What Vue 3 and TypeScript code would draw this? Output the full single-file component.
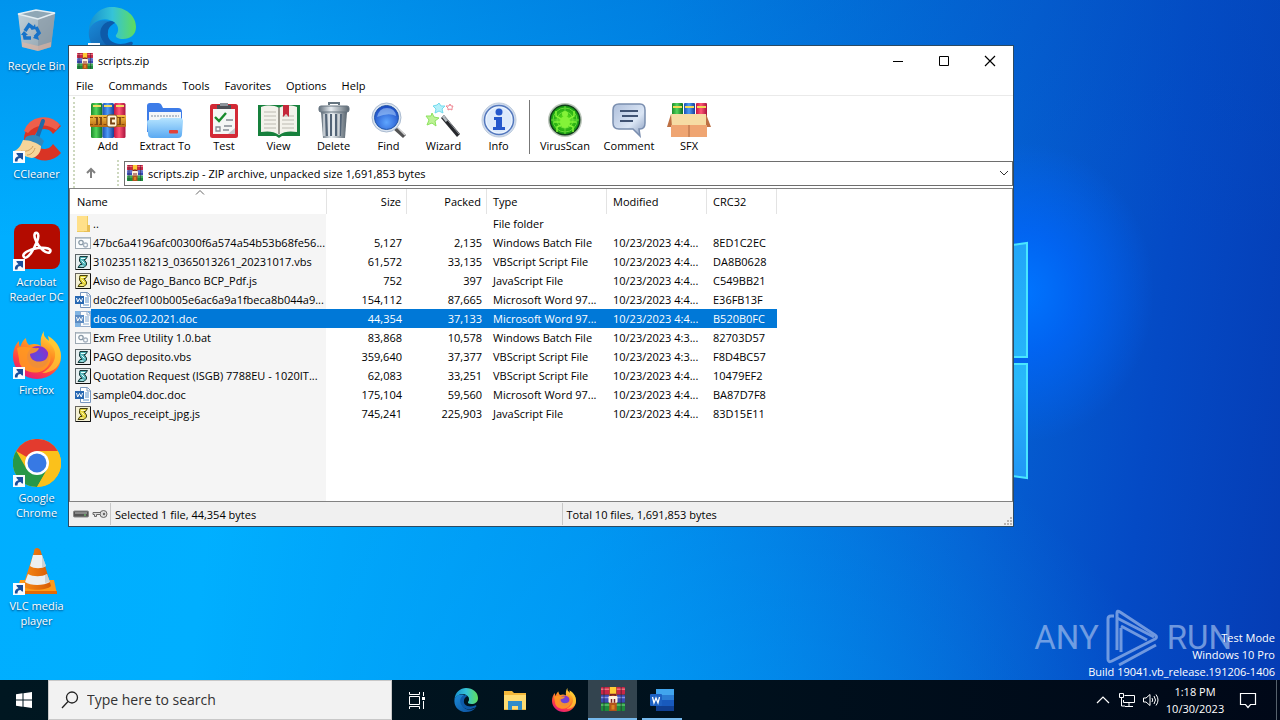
<script setup lang="ts">
import { ref } from 'vue'

interface Shortcut { icon: string; label: string; link: boolean }
interface Tool { icon: string; label: string }
interface Entry { icon: string; name: string; size: string; packed: string; type: string; modified: string; crc: string }

const shortcuts: Shortcut[] = [
  { icon: 'bin', label: 'Recycle Bin', link: false },
  { icon: 'ccleaner', label: 'CCleaner', link: true },
  { icon: 'acrobat', label: 'Acrobat Reader DC', link: true },
  { icon: 'firefox', label: 'Firefox', link: true },
  { icon: 'chrome', label: 'Google Chrome', link: true },
  { icon: 'vlc', label: 'VLC media player', link: true },
]

const menus = ['File', 'Commands', 'Tools', 'Favorites', 'Options', 'Help']

const fileTools: Tool[] = [
  { icon: 'add', label: 'Add' },
  { icon: 'extract', label: 'Extract To' },
  { icon: 'test', label: 'Test' },
  { icon: 'view', label: 'View' },
  { icon: 'delete', label: 'Delete' },
  { icon: 'find', label: 'Find' },
  { icon: 'wizard', label: 'Wizard' },
  { icon: 'info', label: 'Info' },
]
const archiveTools: Tool[] = [
  { icon: 'virus', label: 'VirusScan' },
  { icon: 'comment', label: 'Comment' },
  { icon: 'sfx', label: 'SFX' },
]

const word = 'Microsoft Word 97...'
const batch = 'Windows Batch File'
const vbs = 'VBScript Script File'
const js = 'JavaScript File'
const late = '10/23/2023 4:4...'
const early = '10/23/2023 4:3...'

const entries: Entry[] = [
  { icon: 'folder', name: '..', size: '', packed: '', type: 'File folder', modified: '', crc: '' },
  { icon: 'bat', name: '47bc6a4196afc00300f6a574a54b53b68fe56...', size: '5,127', packed: '2,135', type: batch, modified: late, crc: '8ED1C2EC' },
  { icon: 'vbs', name: '310235118213_0365013261_20231017.vbs', size: '61,572', packed: '33,135', type: vbs, modified: late, crc: 'DA8B0628' },
  { icon: 'js', name: 'Aviso de Pago_Banco BCP_Pdf.js', size: '752', packed: '397', type: js, modified: late, crc: 'C549BB21' },
  { icon: 'doc', name: 'de0c2feef100b005e6ac6a9a1fbeca8b044a9...', size: '154,112', packed: '87,665', type: word, modified: late, crc: 'E36FB13F' },
  { icon: 'doc', name: 'docs 06.02.2021.doc', size: '44,354', packed: '37,133', type: word, modified: late, crc: 'B520B0FC' },
  { icon: 'bat', name: 'Exm Free Utility 1.0.bat', size: '83,868', packed: '10,578', type: batch, modified: early, crc: '82703D57' },
  { icon: 'vbs', name: 'PAGO deposito.vbs', size: '359,640', packed: '37,377', type: vbs, modified: early, crc: 'F8D4BC57' },
  { icon: 'vbs', name: 'Quotation Request (ISGB) 7788EU - 1020IT...', size: '62,083', packed: '33,251', type: vbs, modified: late, crc: '10479EF2' },
  { icon: 'doc', name: 'sample04.doc.doc', size: '175,104', packed: '59,560', type: word, modified: late, crc: 'BA87D7F8' },
  { icon: 'js', name: 'Wupos_receipt_jpg.js', size: '745,241', packed: '225,903', type: js, modified: late, crc: '83D15E11' },
]
const selected = ref(5)
const query = ref('')

const pinned = [
  { icon: 'taskview', label: 'Task View', state: '' },
  { icon: 'edge', label: 'Microsoft Edge', state: '' },
  { icon: 'explorer', label: 'File Explorer', state: '' },
  { icon: 'firefox', label: 'Firefox', state: '' },
  { icon: 'rar', label: 'WinRAR', state: 'active' },
  { icon: 'word', label: 'Word', state: 'running' },
]
</script>

<template>
  <div class="screen">
    <svg class="sprites" width="0" height="0" aria-hidden="true">
      <defs>
        <linearGradient id="gBin" x1="0" y1="0" x2="1" y2="1"><stop offset="0" stop-color="#c3d3dc" /><stop offset="1" stop-color="#8b9da9" /></linearGradient>
        <linearGradient id="gBook1" x1="0" x2="1"><stop offset="0" stop-color="#1b8a2c" /><stop offset=".45" stop-color="#53d65b" /><stop offset="1" stop-color="#0d6c22" /></linearGradient>
        <linearGradient id="gBook2" x1="0" x2="1"><stop offset="0" stop-color="#1c50b5" /><stop offset=".45" stop-color="#4d9cf5" /><stop offset="1" stop-color="#173e97" /></linearGradient>
        <linearGradient id="gBook3" x1="0" x2="1"><stop offset="0" stop-color="#c51440" /><stop offset=".45" stop-color="#ff5676" /><stop offset="1" stop-color="#a8113c" /></linearGradient>
        <linearGradient id="gStrap" x1="0" y1="0" x2="0" y2="1"><stop offset="0" stop-color="#f6c248" /><stop offset="1" stop-color="#b96910" /></linearGradient>
        <linearGradient id="gFold" x1="0" y1="0" x2="0" y2="1"><stop offset="0" stop-color="#b5e4ff" /><stop offset="1" stop-color="#5aa9f2" /></linearGradient>
        <linearGradient id="gSteel" x1="0" x2="1"><stop offset="0" stop-color="#64717d" /><stop offset=".4" stop-color="#e8edf1" /><stop offset="1" stop-color="#59656f" /></linearGradient>
        <radialGradient id="gLens" cx=".5" cy=".7" r=".7"><stop offset="0" stop-color="#5fa6ff" /><stop offset="1" stop-color="#1745c0" /></radialGradient>
        <radialGradient id="gVirus"><stop offset="0" stop-color="#69ef1d" /><stop offset="1" stop-color="#179e12" /></radialGradient>
        <linearGradient id="gTalk" x1="0" y1="0" x2="1" y2="1"><stop offset="0" stop-color="#aebfdb" /><stop offset=".6" stop-color="#dbe6f5" /><stop offset="1" stop-color="#8398bb" /></linearGradient>
        <linearGradient id="gCone" x1="0" x2="1"><stop offset="0" stop-color="#f78a16" /><stop offset="1" stop-color="#d75b04" /></linearGradient>
        <linearGradient id="gEdgeA" x1="0" y1="0" x2="1" y2="0"><stop offset="0" stop-color="#1690cf" /><stop offset=".5" stop-color="#35c3d8" /><stop offset="1" stop-color="#5fdd5b" /></linearGradient>
        <linearGradient id="gEdgeB" x1="0" y1="0" x2="1" y2="1"><stop offset="0" stop-color="#1a8bd8" /><stop offset="1" stop-color="#0c4c99" /></linearGradient>
        <linearGradient id="gFox" x1=".8" y1="0" x2=".3" y2="1"><stop offset="0" stop-color="#ffe346" /><stop offset=".4" stop-color="#ff9422" /><stop offset=".75" stop-color="#ff3d45" /><stop offset="1" stop-color="#e3197d" /></linearGradient>
        <radialGradient id="gGlobe"><stop offset="0" stop-color="#5a4de0" /><stop offset="1" stop-color="#8c30c9" /></radialGradient>
        <linearGradient id="gPane" x1="0" y1="0" x2="0" y2="1"><stop offset="0" stop-color="#22a6f8" /><stop offset=".6" stop-color="#27b8fa" /><stop offset="1" stop-color="#2196f5" /></linearGradient>
      </defs>

      <symbol id="bin" viewBox="0 0 48 48">
        <path d="M5 7 24 3l18 4-4 33-13 4-16-4z" fill="url(#gBin)" />
        <path d="m25 12 17-5-4 33-13 4z" fill="#8495a1" opacity=".6" />
        <path d="M5 7 23 3l19 3-17 6z" fill="#8fa7b6" stroke="#e5eef3" stroke-width="1.400" />
        <path d="m9 35 16 4 13-4v5l-13 4-16-4z" fill="#e8b7a2" opacity=".6" />
        <g fill="none" stroke="#1773c9" stroke-width="3.500"><path d="m12 24 4-6 4 3M23 20l3 6-4 4M18 31h-6l-1-5" /></g>
        <path d="m18 23 5-1-1-5zM24 26l-4 5 6 2zM8 28l3-4 4 4z" fill="#1773c9" />
      </symbol>
      <symbol id="ccleaner" viewBox="0 0 48 48">
        <path d="M48 11A21 21 0 1 0 48 38L40 29A10 10 0 1 1 40 19z" fill="#d93425" />
        <path d="M47 10A21 21 0 0 0 11 16l4 2a20 20 0 0 1 28-3z" fill="#ef5f4b" />
        <path d="M30 6 24 23" stroke="#216aa8" stroke-width="4" stroke-linecap="round" />
        <path d="M13 22c6-3 12-3 18 4l-3 7-18-6z" fill="#3288bb" />
        <path d="M10 25c7 0 14 3 18 6 0 7-4 11-9 12C12 42 5 38 1 36c5-2 7-6 9-11z" fill="#f5d59a" />
        <path d="M8 36c3 1 10 0 12-5M14 40c4 0 7-3 8-7" stroke="#cf9e5c" fill="none" />
      </symbol>
      <symbol id="acrobat" viewBox="0 0 48 48">
        <rect x="1" y="1" width="46" height="45" rx="8" fill="#b30b00" />
        <path d="M11 34c-3-3 5-8 14-9s14 1 12 4c-3 3-11-4-14-11-3-6-1-9 1-8 4 2-2 14-6 20-3 4-6 6-7 4z" fill="none" stroke="#fff" stroke-width="2.600" />
      </symbol>
      <symbol id="firefox" viewBox="0 0 48 48">
        <path d="M31 0c-1 4 1 7 5 10 0-2 0-3-1-5 8 5 13 12 13 21a24 22 0 0 1-48 0c0-7 2-12 6-16 0 2 0 4 1 6 2-5 4-8 6-9 0 3 1 5 3 7 6-2 9-1 12 1-1-6 0-11 3-15z" fill="url(#gFox)" />
        <circle cx="25" cy="26" r="11" fill="url(#gGlobe)" />
        <path d="M4 17c7-3 14 1 22 0-1 4-6 5-9 6 0 6 7 10 15 6 4-3 4-9 1-13 6 5 7 17-2 23-10 6-25 1-25-11z" fill="#ff9b21" opacity=".88" />
        <path d="M31 0c-2 12 13 12 11 26-1 7-7 13-13 16 12 0 19-8 19-17 0-8-5-16-13-20l1 5c-4-3-6-6-5-10z" fill="#ffcb33" opacity=".75" />
      </symbol>
      <symbol id="chrome" viewBox="0 0 48 48">
        <circle cx="24" cy="24" r="24" fill="#fbc11b" />
        <path d="M24 24 3.200 12A24 24 0 0 1 44.800 12z" fill="#e33b2e" />
        <path d="M24 24 34.400 30 24 48A24 24 0 0 1 3.200 12L13.600 30z" fill="#279847" />
        <path d="M24 12h20.800A24 24 0 0 1 24 48l10.400-18z" fill="#fbc11b" />
        <circle cx="24" cy="24" r="12" fill="#fff" /><circle cx="24" cy="24" r="9.500" fill="#3779e4" />
      </symbol>
      <symbol id="vlc" viewBox="0 0 48 48">
        <path d="M7 33h34l3 14H3z" fill="#ff9a18" /><path d="M3 44h41v3H3z" fill="#e26a04" />
        <path d="M24 1c2 0 3 1 4 4l10 34c-5 5-23 5-28 0L21 5c0-3 1-4 3-4z" fill="url(#gCone)" />
        <path d="M20 8h9l4 11c-4 3-12 3-16 0zM15 27c5 3 14 3 19 0l3 8c-6 4-20 4-25 0z" fill="#eceff0" />
        <path d="M29 8v13l4-2zM32 28v8l5-1-3-8z" fill="#b9bec1" opacity=".6" />
      </symbol>
      <symbol id="edge" viewBox="0 0 48 48">
        <path d="M1 23C2 8 13 0 24 0c14 0 24 9 24 20 0 8-6 12-13 12-5 0-8-2-7-4 3-3 3-9-1-12C19 9 6 12 1 23z" fill="url(#gEdgeA)" />
        <path d="M1 23C5 13 15 12 21 14c-8 5-9 15-3 23 5 7 14 7 21 5l5-3c-5 6-12 9-20 9C10 48-1 37 1 23z" fill="url(#gEdgeB)" />
        <path d="M23 14c-9 1-14 11-8 20 6 11 20 10 29 4 2-2 0-4-2-3-12 5-24 0-22-10 0-4 3-7 7-9-1-1-2-2-4-2z" fill="#0d5aa9" />
      </symbol>
      <symbol id="shortcut" viewBox="0 0 12 12">
        <rect width="12" height="12" fill="#f8fbff" /><path d="M2 10.500C1.500 7 3.500 5.500 5.500 5.200L3.500 3V2H10v6.500H9L7.500 7C5.500 7 4.500 8 4.500 10.500z" fill="#1a4f9c" />
      </symbol>

      <symbol id="rar" viewBox="0 0 16 16">
        <rect width="16" height="5" rx=".6" fill="#c92747" /><path d="M0 1.500h16" stroke="#ef6f7d" />
        <rect y="5.300" width="16" height="5" rx=".6" fill="#3a4bb4" /><path d="M0 7h16" stroke="#8692e7" />
        <rect y="10.600" width="16" height="5.400" rx=".6" fill="#1e8b3c" /><path d="M0 12h16" stroke="#5fc66e" />
        <path d="M2 0v16M13.500 0v16" stroke="#262033" opacity=".45" />
        <rect x="5.500" width="5" height="16" fill="#b4541b" /><path d="M6 0h4v5H6z" fill="#ffca35" />
        <rect x="5" y="6" width="6" height="4.500" rx=".8" fill="#fff2db" /><path d="M6.500 6v-1h3v1M7 8v2.500M9 8v2.500" stroke="#7b1f25" fill="none" />
        <path d="M7 12h2v3H7z" fill="#d88422" />
      </symbol>
      <symbol id="add" viewBox="0 0 36 36">
        <rect x="1" y="1" width="11.500" height="35" rx="1.500" fill="url(#gBook1)" /><rect x="12.500" y="1" width="11.500" height="35" rx="1.500" fill="url(#gBook2)" /><rect x="24" y="1" width="11.500" height="35" rx="1.500" fill="url(#gBook3)" />
        <path d="M3 4h8M14 4h8M26 4h8" stroke="#f1dd62" stroke-width="2" />
        <rect x="0" y="13" width="36" height="12" rx="1.500" fill="url(#gStrap)" /><path d="M0 15.500h36M0 22.500h36" stroke="#8d4b09" stroke-dasharray="3 1.500" />
        <rect x="17" y="13" width="10" height="12" rx="2" fill="#fff4d5" stroke="#8b5414" /><path d="M25 16.500h-4v5h4M7 15v8M11 15v8M30 15v8" stroke="#784312" stroke-width="1.800" fill="none" />
      </symbol>
      <symbol id="extract" viewBox="0 0 36 36">
        <path d="M0 30V4q0-3 3-3h8q3 0 4 3l1 2h15q4 0 4 4v19z" fill="#3d7ce8" />
        <path d="M2 10h32v20H2z" fill="#f3f6f8" /><path d="M4 14h28" stroke="#b8c1cb" stroke-width="2" stroke-dasharray="2 1" />
        <path d="M2 18h9q2 0 3-2h19q3 0 3 3l-1 13q0 4-4 4H5q-4 0-4-4L0 20q0-2 2-2z" fill="url(#gFold)" />
        <rect x="22" y="28" width="9" height="3.500" rx="1" fill="#e24239" />
      </symbol>
      <symbol id="test" viewBox="0 0 36 36">
        <rect x="4" y="2" width="28" height="34" rx="2.500" fill="#d32935" /><path d="M7 7h22v25H7z" fill="#f5f6f5" /><path d="m22 32 7-6v6z" fill="#c3c9cd" />
        <path d="M11 3h14v4H11z" fill="#4c4f55" /><path d="M14 1h8v3h-8z" fill="#8e959c" />
        <path d="m9 15 4 4 7-8" stroke="#188a2b" stroke-width="2.400" fill="none" /><path d="M20 18h7M18 24h8M17 28h6M10 25h4v4h-4z" stroke="#858c94" stroke-width="1.300" fill="none" />
      </symbol>
      <symbol id="view" viewBox="0 0 44 36">
        <path d="M1 3h42v31H25l-3 2-3-2H1z" fill="#16803c" /><path d="M4 5c6-2 13-2 18 1 5-3 12-3 18-1v25c-6-1-13-1-18 3-5-4-12-4-18-3z" fill="#f3f2eb" />
        <path d="M22 6v26" stroke="#9c9a90" stroke-width="2" /><path d="M7 10h12M7 14h12M7 18h12M7 22h12M7 26h12M25 14h12M25 18h12M25 22h12M25 26h12" stroke="#bcbab1" />
        <path d="M26 3h6v12l-3-3-3 3z" fill="#c4283a" />
      </symbol>
      <symbol id="delete" viewBox="0 0 36 36">
        <path d="M13 3V1h10v2" stroke="#667580" stroke-width="2" fill="none" /><path d="m5 10 2 26h22l2-26z" fill="url(#gSteel)" />
        <path d="m10 12 1 22m4-22v22m5-22v22m5-22-1 22" stroke="#536477" stroke-width="2" /><path d="M8 12v22m5-22v22m5-22v22m5-22v22" stroke="#f5f8fb" />
        <rect x="3" y="4" width="30" height="6" rx="2" fill="url(#gSteel)" stroke="#65727e" />
      </symbol>
      <symbol id="find" viewBox="0 0 36 36">
        <path d="m25 24 10 9-3 3-10-9z" fill="#535354" /><path d="m26 25 8 8" stroke="#d2d2d2" stroke-width="1.500" />
        <circle cx="15.500" cy="15.500" r="14.500" fill="#dae3ef" stroke="#aabbd1" /><circle cx="15.500" cy="15.500" r="12" fill="url(#gLens)" stroke="#2458a9" />
        <path d="M6 15q2-9 10-9t9 8q-7-4-19 1z" fill="#b9dbff" opacity=".5" />
      </symbol>
      <symbol id="wizard" viewBox="0 0 36 36">
        <path d="m18 13 16 19-3 3-16-19z" fill="#27292d" /><path d="m17 14 4 5" stroke="#b6bdc2" stroke-width="3" /><path d="m19 15 14 17" stroke="#91959b" />
        <path d="m6 11 2 4 5 1-4 3 1 5-4-3-5 2 2-5-3-4h5z" fill="#bdf296" stroke="#8ce25e" /><path d="m13 1 2 3 4 0-3 3 1 4-4-2-4 2 1-4-3-3 4-1z" fill="#b4f0fa" stroke="#72daed" /><path d="m24 2 1 2 2 0-1 2 0 2-2-1-2 1 0-2-2-2 3 0z" fill="#fff" stroke="#ee8591" />
      </symbol>
      <symbol id="info" viewBox="0 0 36 36">
        <circle cx="18" cy="18" r="17" fill="#cfdbee" stroke="#bfcddd" /><circle cx="18" cy="18" r="14.500" fill="#edf5ff" stroke="#5378bd" stroke-width="1.500" /><circle cx="18" cy="18" r="12.500" fill="#dceafb" />
        <circle cx="18" cy="10" r="3.500" fill="#2458cc" /><path d="M13 15h8v10h3v3H12v-3h3v-7h-2z" fill="#2458cc" />
      </symbol>
      <symbol id="virus" viewBox="0 0 36 36">
        <circle cx="18" cy="18" r="17" fill="#bbc5ba" /><circle cx="18" cy="18" r="15.500" fill="#113f1b" /><circle cx="18" cy="18" r="14" fill="url(#gVirus)" />
        <g fill="none" stroke="#83ed4b" opacity=".7"><circle cx="18" cy="18" r="8" /><circle cx="18" cy="18" r="12" /><path d="M18 4v28M4 18h28" /></g>
        <ellipse cx="18" cy="20" rx="5" ry="6" fill="#84f338" /><circle cx="18" cy="12" r="3" fill="#84f338" /><path d="m14 17-5-3V9m13 8 5-3V9m-13 11H7m15 0h7m-15 3-4 2v5m12-7 4 2v5" stroke="#84f338" stroke-width="1.500" fill="none" />
      </symbol>
      <symbol id="comment" viewBox="0 0 36 36">
        <path d="M8 2h21q5 0 5 6v13q0 6-5 6h-1l1 7-7-7H8q-6 0-6-6V8q0-6 6-6z" fill="url(#gTalk)" stroke="#7a8eaf" stroke-width="1.500" /><path d="M9 9h18M11 14h16M9 19h13" stroke="#405373" stroke-width="2" />
      </symbol>
      <symbol id="sfx" viewBox="0 0 44 36">
        <rect x="5" y="1" width="11" height="17" rx="1" fill="url(#gBook1)" /><rect x="17" y="1" width="11" height="17" rx="1" fill="url(#gBook2)" /><rect x="29" y="1" width="11" height="17" rx="1" fill="url(#gBook3)" /><path d="M6 5h9m3 0h9m3 0h9" stroke="#f2d953" stroke-width="2" />
        <path d="M4 12h35v22H4z" fill="#d98a57" /><path d="M4 12h35v12H4z" fill="#f6dca4" /><path d="m4 12-4 13h5zM39 12l5 13h-5z" fill="#bd7043" /><path d="M4 23h36v12H4z" fill="#efa572" /><path d="M22 23v12" stroke="#ad6841" />
      </symbol>

      <symbol id="folder" viewBox="0 0 16 16"><path d="M2 0h11v16H2z" fill="#efcd62" /><path d="M2 0h10v15H2z" fill="#ffe08a" /><path d="M12 9h3v7H9v-1h3z" fill="#e8be55" /></symbol>
      <symbol id="bat" viewBox="0 0 16 16"><rect x=".5" y="2.500" width="15" height="11" fill="#fafcfd" stroke="#9da8b2" /><path d="M1 3h14" stroke="#b1bcc5" stroke-width="1.500" /><circle cx="6" cy="7.500" r="2.200" fill="none" stroke="#8999a6" stroke-width="1.300" /><circle cx="10.500" cy="10" r="2" fill="none" stroke="#a6b2bf" stroke-width="1.300" /></symbol>
      <symbol id="vbs" viewBox="0 0 16 16"><rect x=".5" y=".5" width="15" height="15" fill="#e7eff0" stroke="#5d6567" /><path d="M1 15.500h14.500V1" stroke="#111" fill="none" /><path d="M5 2.500h7.500l-2 3H9l2.500 3.500v2l-2.500 2.500H3l2-3h2L4.500 7V4.500z" fill="#4fb3b8" stroke="#18393a" /><path d="M6 4.500h4M6.500 6.500l3 3M5.500 12h3" stroke="#e7ffff" /></symbol>
      <symbol id="js" viewBox="0 0 16 16"><rect x=".5" y=".5" width="15" height="15" fill="#f4f1d4" stroke="#66645d" /><path d="M1 15.500h14.500V1" stroke="#111" fill="none" /><path d="M5 2.500h7.500l-2 3H9l2.500 3.500v2l-2.500 2.500H3l2-3h2L4.500 7V4.500z" fill="#e5d53a" stroke="#45400f" /><path d="M6 4.500h4M6.500 6.500l3 3M5.500 12h3" stroke="#fffbbd" /></symbol>
      <symbol id="doc" viewBox="0 0 16 16"><path d="M5.500.5h7l3 3v12h-10z" fill="#fff" stroke="#7795bd" /><path d="M12 1v3h3" fill="none" stroke="#7795bd" /><path d="M10 6h4M10 8h4M10 10h4M8 13h6" stroke="#5d91c8" /><rect y="4" width="9" height="8" fill="#2868b2" /><path d="m1.500 6 1.200 4L4.500 6.500 6.300 10 7.500 6" fill="none" stroke="#fff" /></symbol>

      <symbol id="taskview" viewBox="0 0 24 24"><path d="M4.500 8.500h10v8h-10zM4.500 4v2.500h10V4M4.500 21v-2.500h10V21M18.500 4v4M18.500 13v8" stroke="#fff" fill="none" /><path d="M17 9h3v3h-3z" fill="#fff" /></symbol>
      <symbol id="explorer" viewBox="0 0 24 24"><path d="M1 3h8l2 2h12v17H1z" fill="#f4b83a" /><path d="M1 7h22v14H1z" fill="#ffdc72" /><path d="M5 13h14v9h-4v-4H9v4H5z" fill="#308cc9" /></symbol>
      <symbol id="word" viewBox="0 0 24 24"><rect x="6" y="1" width="18" height="22" rx="1.500" fill="#185abd" /><path d="M6 1h18v6H6z" fill="#41a5ee" /><path d="M6 7h18v5H6z" fill="#2b7cd3" /><path d="M6 18h18v5H6z" fill="#103f91" /><rect y="6" width="12" height="12" rx="1" fill="#1d61c2" /><path d="m2.500 9 1.500 6 2-5 2 5 1.500-6" fill="none" stroke="#fff" stroke-width="1.300" /></symbol>
    </svg>

    <main class="desktop">
      <svg class="wallpaper" viewBox="0 0 1280 720" preserveAspectRatio="none" aria-hidden="true">
        <path d="M850 266 1027 243v114H850zM850 364h177v114L850 455z" fill="url(#gPane)" stroke="#49e6ff" stroke-width="2" />
      </svg>

      <nav class="shortcuts" aria-label="Desktop">
        <button v-for="s in shortcuts" :key="s.icon" class="shortcut">
          <span class="picture">
            <svg width="48" height="48"><use :href="'#' + s.icon" /></svg>
            <svg v-if="s.link" class="badge" width="12" height="12"><use href="#shortcut" /></svg>
          </span>
          <span class="caption">{{ s.label }}</span>
        </button>
        <button class="shortcut" aria-label="Microsoft Edge">
          <span class="picture">
            <svg width="48" height="48"><use href="#edge" /></svg>
            <svg class="badge" width="12" height="12"><use href="#shortcut" /></svg>
          </span>
        </button>
      </nav>

      <section class="window">
        <header class="titlebar">
          <svg width="16" height="16"><use href="#rar" /></svg>
          <h1>scripts.zip</h1>
          <button aria-label="Minimize"><svg width="12" height="12"><path d="M1 6.500h10" stroke="#000" /></svg></button>
          <button aria-label="Maximize"><svg width="12" height="12"><path d="M1.500 1.500h9v9h-9z" fill="none" stroke="#000" /></svg></button>
          <button aria-label="Close"><svg width="12" height="12"><path d="m1 1 10 10M11 1 1 11" stroke="#000" stroke-width="1.200" /></svg></button>
        </header>
        <nav class="menubar">
          <button v-for="m in menus" :key="m">{{ m }}</button>
        </nav>

        <div class="bars">
          <div class="toolbar">
            <button v-for="t in fileTools" :key="t.icon"><svg width="44" height="36"><use :href="'#' + t.icon" /></svg>{{ t.label }}</button>
            <span class="divider"></span>
            <button v-for="t in archiveTools" :key="t.icon"><svg width="44" height="36"><use :href="'#' + t.icon" /></svg>{{ t.label }}</button>
          </div>
          <div class="address">
            <button class="up" aria-label="Up one level"><svg width="12" height="12"><path d="M6 11V2M2 6l4-4 4 4" fill="none" stroke="#808080" stroke-width="2" /></svg></button>
            <div class="path">
              <svg width="16" height="16"><use href="#rar" /></svg>
              <select aria-label="Archive path"><option>scripts.zip - ZIP archive, unpacked size 1,691,853 bytes</option></select>
              <svg class="chevron" width="10" height="6"><path d="m1 1 4 4 4-4" fill="none" stroke="#333" /></svg>
            </div>
          </div>
        </div>

        <div class="list">
          <svg class="sort" width="10" height="5" aria-hidden="true"><path d="m1 4.500 4-4 4 4" fill="none" stroke="#666" /></svg>
          <table>
            <colgroup><col class="c-name" /><col class="c-size" /><col class="c-size" /><col class="c-type" /><col class="c-date" /><col class="c-crc" /></colgroup>
            <thead>
              <tr><th>Name</th><th class="num">Size</th><th class="num">Packed</th><th>Type</th><th>Modified</th><th>CRC32</th></tr>
            </thead>
            <tbody>
              <tr v-for="(e, i) in entries" :key="e.name" :class="{ selected: i === selected }" @click="selected = i">
                <td class="name"><div><svg width="16" height="16"><use :href="'#' + e.icon" /></svg><span>{{ e.name }}</span></div></td>
                <td class="num">{{ e.size }}</td>
                <td class="num">{{ e.packed }}</td>
                <td>{{ e.type }}</td>
                <td>{{ e.modified }}</td>
                <td>{{ e.crc }}</td>
              </tr>
            </tbody>
          </table>
        </div>

        <footer class="status">
          <div class="lamps">
            <svg width="16" height="10"><rect x=".5" y="2" width="15" height="6" rx="1" fill="#555" stroke="#888" /><path d="M2 4h12" stroke="#bbb" /><path d="M11 6h2" stroke="#6fdc6f" /></svg>
            <svg width="16" height="10"><circle cx="11.500" cy="5" r="3.500" fill="#ddd" stroke="#666" /><circle cx="12" cy="5" r="1.200" fill="#666" /><path d="M8 3.500H1v2h1.500v2h2v-2H8" fill="#ddd" stroke="#666" /></svg>
          </div>
          <div class="part">Selected 1 file, 44,354 bytes</div>
          <div class="part">Total 10 files, 1,691,853 bytes</div>
          <svg class="grip" width="9" height="9" aria-hidden="true"><path d="M7 0h2v2H7zM7 3h2v2H7zM4 3h2v2H4zM7 6h2v2H7zM4 6h2v2H4zM1 6h2v2H1z" fill="#b9b3b0" /></svg>
        </footer>
      </section>

      <div class="brand">
        <span>ANY</span>
        <svg width="56" height="60" viewBox="0 0 56 60"><g fill="none" stroke="#a9c3ef" stroke-width="3" stroke-linejoin="round"><path d="M9 8H6q-3 0-3 3v40q0 4 4 2l43-22q3-2 0-4L15 4q-3-2-3 1v37" /><path d="m12 10 37 19M16 20v24M16 18l26 14M14 57l37-20" /></g></svg>
        <span>RUN</span>
      </div>
      <p class="build"><span>Test Mode</span><span>Windows 10 Pro</span><span>Build 19041.vb_release.191206-1406</span></p>
    </main>

    <footer class="taskbar">
      <button class="start" aria-label="Start"><svg width="16" height="16"><path d="M0 2.200 6.500 1.300V7.500H0zM7.500 1.200 16 0v7.500H7.500zM0 8.500h6.500v6.200L0 13.800zM7.500 8.500H16V16l-8.500-1.200z" fill="#fff" /></svg></button>
      <label class="search">
        <svg width="18" height="18"><circle cx="11" cy="6.500" r="5.500" fill="none" stroke="#222" stroke-width="1.300" /><path d="m7 10.500-6 6.500" stroke="#222" stroke-width="1.300" /></svg>
        <input v-model="query" type="text" aria-label="Search" placeholder="Type here to search" />
      </label>
      <button v-for="p in pinned" :key="p.icon" class="pin" :class="p.state" :aria-label="p.label"><svg width="24" height="24"><use :href="'#' + p.icon" /></svg></button>
      <div class="tray">
        <button aria-label="Show hidden icons"><svg width="14" height="16"><path d="m1 11 6-6 6 6" fill="none" stroke="#fff" stroke-width="1.200" /></svg></button>
        <button aria-label="Network"><svg width="18" height="16"><path d="M6.500 3.500h10v7h-11V8M11 11v3M7 14.500h8M1.500 1.500h4v4h-4zM3.500 6v8H7" fill="none" stroke="#fff" /></svg></button>
        <button aria-label="Volume"><svg width="18" height="16"><path d="M1.500 6h2.500l4-3.500v11L4 10H1.500zM10 6q1.500 2 0 4M12 4q3 4 0 8M14 2.500q4 5.500 0 11" fill="none" stroke="#fff" /></svg></button>
        <button class="clock"><span>1:18 PM</span><span>10/30/2023</span></button>
        <button class="notes" aria-label="Notifications"><svg width="18" height="17"><path d="M1.500 1.500h15v11h-5l-2.500 3-2.500-3h-5z" fill="none" stroke="#fff" stroke-width="1.200" /></svg></button>
        <span class="peek"></span>
      </div>
    </footer>
  </div>
</template>

<style>
body { overflow: hidden; }
</style>

<style scoped>
* { box-sizing: border-box; }
.screen {
  display: flex; flex-direction: column; height: 100vh;
  font: 11px/15px "Open Sans", "Noto Sans", sans-serif; color: #000;
}
.sprites { position: absolute; }
button { margin: 0; padding: 0; border: 0; background: none; font: inherit; color: inherit; }
svg { display: block; flex: none; }

.desktop {
  position: relative; flex: 1; min-height: 0; overflow: hidden;
  background:
    radial-gradient(ellipse 130px 150px at 80% 43%, #0074ff 0, rgba(0, 104, 255, .7) 40%, rgba(0, 84, 220, 0) 100%),
    radial-gradient(ellipse 620px 460px at 44% 118%, rgba(0, 170, 255, .6), rgba(0, 160, 250, 0)),
    linear-gradient(180deg, rgba(0, 80, 190, .28), rgba(0, 90, 200, 0) 35%),
    linear-gradient(97deg, #00aeff 0, #00b0ff 20%, #0091ee 48%, #0560d2 76%, #044ac5 88%, #053cb4 100%);
}
.wallpaper { position: absolute; top: 0; left: 0; width: 100%; height: 100vh; }

.shortcuts {
  position: relative; display: flex; flex-flow: column wrap; align-content: flex-start;
  column-gap: 2px; height: 100%; padding-top: 7px;
}
.shortcut { display: flex; flex-direction: column; align-items: center; gap: 3px; width: 73px; height: 108px; }
.picture { position: relative; width: 48px; }
.badge { position: absolute; left: 0; bottom: 0; }
.caption { max-width: 66px; color: #fff; text-align: center; text-shadow: 0 1px 2px #003a6e; }

.window {
  position: absolute; top: 45px; left: 68px; right: 266px; bottom: 153px;
  display: flex; flex-direction: column; background: #fff; border: 1px solid #2b4a63;
}
.titlebar { display: flex; align-items: center; height: 29px; padding-left: 8px; }
.titlebar h1 { flex: 1; margin: 0; padding-left: 5px; font: inherit; }
.titlebar button { display: grid; place-items: center; width: 46px; height: 29px; }
.menubar { display: flex; gap: 1px; height: 21px; border-bottom: 1px solid #eaeaea; }
.menubar button { padding: 0 7px; }

.bars { margin-left: 4px; border-left: 2px dotted #cdd8bf; height: 91px; margin-top: 1px; }
.toolbar {
  display: grid; grid-template-columns: 50px 64px 54px repeat(5, 55px) 7px 64px 64px 56px;
  height: 63px; padding-left: 8px;
}
.toolbar button { display: flex; flex-direction: column; align-items: center; justify-content: flex-start; padding-top: 5px; white-space: nowrap; }
.divider { justify-self: center; width: 1px; height: 54px; margin-top: 3px; background: #777; }
.address { display: flex; height: 26px; }
.up { display: grid; place-items: center; width: 31px; }
.path { position: relative; flex: 1; display: flex; align-items: center; margin-left: 11px; border-left: 2px dotted #cdd8bf; padding-left: 5px; }
.path select {
  flex: 1; height: 25px; padding: 0 20px 0 23px; border: 1px solid #6e6e6e; border-radius: 0;
  appearance: none; background: #fff; font: inherit; color: #000;
}
.path svg { position: absolute; left: 8px; z-index: 1; pointer-events: none; }
.path .chevron { left: auto; right: 4px; }

.list {
  position: relative; flex: 1; min-height: 0; margin: 0; border: 1px solid #828282; overflow: hidden;
  background: linear-gradient(#f5f5f5, #f5f5f5) 0 25px / 256px 100% no-repeat #fff;
}
.sort { position: absolute; left: 125px; top: 1px; }
table { table-layout: fixed; width: 707px; border-collapse: separate; border-spacing: 0; }
.c-name { width: 257px; }
.c-size { width: 80px; }
.c-type { width: 120px; }
.c-date { width: 100px; }
.c-crc { width: 70px; }
th { height: 25px; padding: 0 6px; border-right: 1px solid #e3e3e3; font-weight: 400; text-align: left; }
th:first-child { padding-left: 7px; }
td { height: 19px; padding: 0 6px; white-space: nowrap; overflow: hidden; }
th.num, td.num { text-align: right; padding-right: 5px; }
td.name { padding: 0; }
.name div { display: flex; align-items: center; height: 19px; padding-left: 5px; }
.name span { flex: 1; height: 19px; line-height: 19px; padding-left: 2px; }
.selected td { background: #0078d7; color: #fff; }
.selected td.name { background: none; }
.selected .name span { background: #0078d7; }
.selected .name svg { background: #5b9fdc; opacity: .75; }

.status { position: relative; display: flex; align-items: center; height: 24px; background: #f0f0f0; }
.lamps { display: flex; gap: 3px; width: 41px; padding-left: 4px; }
.part { flex: 1; height: 22px; padding-left: 4px; line-height: 24px; border-left: 1px solid #c8c8c8; }
.grip { position: absolute; right: 1px; bottom: 0; }

.brand {
  position: absolute; right: 48px; bottom: 12px; display: flex; align-items: center; gap: 6px;
  color: #a9c3ef; font: 33px/60px "Liberation Sans Narrow", "Roboto", sans-serif; opacity: .65;
}
.build { position: absolute; right: 5px; bottom: 1px; display: flex; flex-direction: column; gap: 2px; margin: 0; text-align: right; color: #fff; }

.taskbar { display: flex; height: 40px; background: linear-gradient(90deg, #001721, #00111d 55%, #000818); color: #fff; }
.start { display: grid; place-items: center; width: 48px; }
.search { display: flex; align-items: center; gap: 8px; width: 344px; padding-left: 12px; background: #f2f2f2; border: 1px solid #c8c8c8; }
.search input { flex: 1; min-width: 0; padding: 0; border: 0; outline: 0; background: none; font: 14px/20px "Open Sans", "Noto Sans", sans-serif; color: #222; }
.search input::placeholder { color: #333; opacity: 1; }
.pin { display: grid; place-items: center; width: 49px; }
.pin.active { background: #33444f; border-bottom: 2px solid #76b9ed; }
.pin.running { background: linear-gradient(#76b9ed, #76b9ed) center bottom / 40px 2px no-repeat; }
.tray { display: flex; align-items: center; margin-left: auto; }
.tray button { display: grid; place-items: center; width: 24px; height: 40px; }
.tray .clock { display: flex; flex-direction: column; justify-content: center; align-items: center; gap: 2px; width: 64px; }
.tray .notes { width: 41px; }
.peek { width: 4px; height: 40px; margin-left: 8px; border-left: 1px solid #56616c; }
</style>
